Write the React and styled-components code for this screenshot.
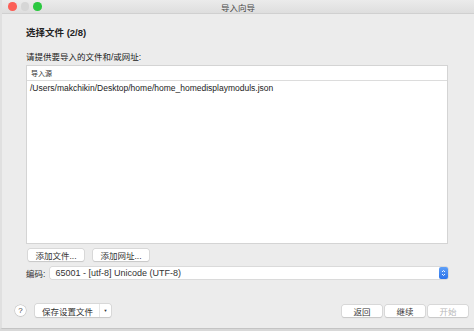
import React from 'react';
import styled, { createGlobalStyle } from 'styled-components';

const Global = createGlobalStyle`
  html, body { margin: 0; padding: 0; background: #d8d8d8; }
  body { font-family: "Liberation Sans", "Noto Sans CJK SC", sans-serif; }
`;

const Window = styled.div`
  width: 474px;
  height: 329px;
  background: #ececec;
  display: flex;
  flex-direction: column;
  border-left: 2px solid #e0e0e0;
  box-sizing: border-box;
  border-bottom: 1px solid #c4c4c4;
`;

const TitleBar = styled.div`
  height: 13px;
  position: relative;
  display: flex;
  align-items: center;
  justify-content: center;
  background: linear-gradient(#ebebeb, #dedede);
  border-bottom: 1px solid #d0d0d0;
  font-size: 8.5px;
  color: #4a4a4a;
`;

const Lights = styled.div`
  position: absolute;
  left: 6px;
  top: 2px;
  display: flex;
  gap: 4px;
`;

const Light = styled.span`
  width: 8.5px;
  height: 8.5px;
  border-radius: 50%;
  background: ${p => p.c};
`;

const Body = styled.div`
  flex: 1;
  padding: 11px 26px 0 24px;
  display: flex;
  flex-direction: column;
`;

const Heading = styled.div`
  font-size: 9.5px;
  font-weight: bold;
  color: #222;
`;

const Prompt = styled.div`
  font-size: 8.5px;
  color: #222;
  margin-top: 11px;
`;

const Table = styled.div`
  margin-top: 3px;
  height: 177px;
  background: #fff;
  border: 1px solid #d4d4d4;
  display: flex;
  flex-direction: column;
`;

const TableHead = styled.div`
  height: 14px;
  border-bottom: 1px solid #dcdcdc;
  font-size: 7px;
  color: #333;
  display: flex;
  align-items: center;
  padding-left: 4px;
`;

const TableRow = styled.div`
  font-size: 8.5px;
  color: #222;
  padding: 2px 0 0 3px;
`;

const ButtonRow = styled.div`
  display: flex;
  gap: 9px;
  margin-top: 5px;
  padding-left: 2px;
`;

const Btn = styled.div`
  height: 12px;
  padding: 0 6px;
  min-width: ${p => p.w || 0}px;
  box-sizing: border-box;
  background: #fff;
  border-radius: 2px;
  box-shadow: 0 0 0 0.5px #c8c8c8, 0 0.5px 1px rgba(0,0,0,0.15);
  display: flex;
  align-items: center;
  justify-content: center;
  font-size: 8.5px;
  color: ${p => (p.disabled ? '#b8b8b8' : '#333')};
`;

const EncRow = styled.div`
  display: flex;
  align-items: center;
  margin-top: 6px;
  gap: 5px;
`;

const Label = styled.span`
  font-size: 8.5px;
  color: #333;
`;

const Select = styled.div`
  flex: 1;
  height: 12px;
  background: #fff;
  border-radius: 2px;
  box-shadow: 0 0 0 0.5px #c8c8c8;
  display: flex;
  align-items: center;
  justify-content: space-between;
  padding-left: 5px;
  font-size: 9px;
  color: #333;
`;

const Stepper = styled.div`
  width: 9px;
  height: 12px;
  border-radius: 2px;
  background: linear-gradient(#5fa0f8, #2a72ea);
  display: flex;
  align-items: center;
  justify-content: center;
`;

const Footer = styled.div`
  display: flex;
  align-items: center;
  padding: 0 6px 11px 13px;
  margin-top: auto;
`;

const Help = styled.div`
  width: 11px;
  height: 11px;
  border-radius: 50%;
  background: #fff;
  box-shadow: 0 0 0 0.5px #c0c0c0, 0 0.5px 1px rgba(0,0,0,0.2);
  font-size: 8px;
  color: #444;
  display: flex;
  align-items: center;
  justify-content: center;
  margin-right: 9px;
`;

const SplitBtn = styled.div`
  height: 13px;
  display: flex;
  background: #fff;
  border-radius: 2px;
  box-shadow: 0 0 0 0.5px #c8c8c8, 0 0.5px 1px rgba(0,0,0,0.15);
  font-size: 8.5px;
  color: #333;
`;

const SplitMain = styled.div`
  padding: 0 6px 0 7px;
  display: flex;
  align-items: center;
  border-right: 1px solid #e6e6e6;
`;

const SplitArrow = styled.div`
  width: 11px;
  display: flex;
  align-items: center;
  justify-content: center;
  font-size: 4px;
`;

const Right = styled.div`
  margin-left: auto;
  display: flex;
  gap: 3px;
`;

export default function App() {
  return (
    <>
      <Global />
      <Window>
        <TitleBar>
          <Lights>
            <Light c="#fc5f57" />
            <Light c="#d6d6d6" />
            <Light c="#2bc840" />
          </Lights>
          导入向导
        </TitleBar>
        <Body>
          <Heading>选择文件 (2/8)</Heading>
          <Prompt>请提供要导入的文件和/或网址:</Prompt>
          <Table>
            <TableHead>导入源</TableHead>
            <TableRow>/Users/makchikin/Desktop/home/home_homedisplaymoduls.json</TableRow>
          </Table>
          <ButtonRow>
            <Btn w={56}>添加文件...</Btn>
            <Btn w={56}>添加网址...</Btn>
          </ButtonRow>
          <EncRow>
            <Label>编码:</Label>
            <Select>
              65001 - [utf-8] Unicode (UTF-8)
              <Stepper>
                <svg width="5" height="8" viewBox="0 0 5 8">
                  <path d="M1 3 L2.5 1.5 L4 3 M1 5 L2.5 6.5 L4 5" stroke="#fff" strokeWidth="0.9" fill="none" />
                </svg>
              </Stepper>
            </Select>
          </EncRow>
        </Body>
        <Footer>
          <Help>?</Help>
          <SplitBtn>
            <SplitMain>保存设置文件</SplitMain>
            <SplitArrow>▼</SplitArrow>
          </SplitBtn>
          <Right>
            <Btn w={40}>返回</Btn>
            <Btn w={40}>继续</Btn>
            <Btn w={40} disabled>开始</Btn>
          </Right>
        </Footer>
      </Window>
    </>
  );
}
